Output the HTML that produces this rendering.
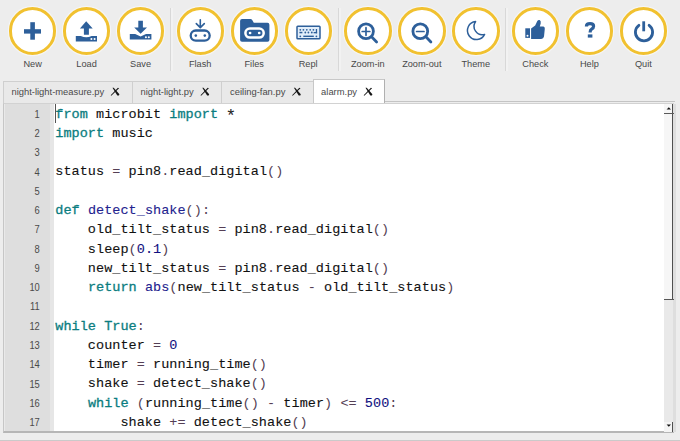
<!DOCTYPE html>
<html><head><meta charset="utf-8">
<style>
*{margin:0;padding:0;box-sizing:border-box}
html,body{width:680px;height:441px;overflow:hidden;background:#ededed;font-family:"Liberation Sans",sans-serif}
.btn{position:absolute;top:7.4px;width:47.4px;height:47.4px;border:3.9px solid #f1c130;border-radius:50%;background:#fff;box-shadow:0 0 1px 1px rgba(255,255,255,0.6)}
.btn svg{position:absolute;left:-3.6px;top:-3.6px;width:47.5px;height:47.5px}
.lbl{position:absolute;top:58.6px;width:80px;text-align:center;font-size:9.2px;color:#484848;line-height:11px}
.sep{position:absolute;top:8px;width:1px;height:63px;background:#d8d8d8;box-shadow:1.5px 0 0 #f7f7f7}
.tab{position:absolute;top:80.6px;height:22.4px;border:1px solid #cfcfcf;border-bottom:none;background:#e9e9e9}
.tab.act{top:79px;height:25px;background:#fff;border-color:#c8c8c8}
.tt{position:absolute;top:84.3px;font-size:9.4px;color:#4a4a4a;line-height:16px;white-space:nowrap}
#ed{position:absolute;left:3px;top:103px;width:671px;height:330px;border:1px solid #d2d2d2;border-left-color:#c6c6c6;border-bottom:2px solid #b6b6b6;background:#fff;overflow:hidden}
#gut{position:absolute;left:0;top:0;width:45.7px;height:100%;background:#dedede;border-left:1px solid #e9e9e9}
#gut2{position:absolute;left:45.7px;top:0;width:4px;height:100%;background:#e6e6e6}
.ln{position:absolute;left:0;width:35.8px;text-align:right;font-size:10.4px;color:#4a4a4a;height:19.27px;line-height:19.27px;margin-top:0.8px;transform:scaleX(0.9);transform-origin:100% 50%}
#code{position:absolute;left:51.3px;top:0.7px;font-family:"Liberation Mono",monospace;font-size:13.5px;letter-spacing:0.04px;line-height:19.27px;color:#111;white-space:pre;-webkit-text-stroke:0.1px}
.k{color:#0b7d80;-webkit-text-stroke:0.3px #0b7d80}
.n{color:#101080}
.f{color:#22228e}
.o{color:#553f55;-webkit-text-stroke:0}
#sb{position:absolute;left:660px;top:0;width:10.5px;height:328px;background:#ebebeb}
</style></head><body>
<!-- toolbar -->
<div class="btn" style="left:9.10px"></div>
<div class="btn" style="left:63.10px"></div>
<div class="btn" style="left:117.10px"></div>
<div class="btn" style="left:176.70px"></div>
<div class="btn" style="left:230.70px"></div>
<div class="btn" style="left:284.70px"></div>
<div class="btn" style="left:344.30px"></div>
<div class="btn" style="left:398.30px"></div>
<div class="btn" style="left:452.30px"></div>
<div class="btn" style="left:511.90px"></div>
<div class="btn" style="left:565.90px"></div>
<div class="btn" style="left:619.90px"></div>
<div class="sep" style="left:170.00px"></div>
<div class="sep" style="left:337.50px"></div>
<div class="sep" style="left:505.00px"></div>
<div class="lbl" style="left:-7.40px">New</div>
<div class="lbl" style="left:46.60px">Load</div>
<div class="lbl" style="left:100.60px">Save</div>
<div class="lbl" style="left:160.20px">Flash</div>
<div class="lbl" style="left:214.20px">Files</div>
<div class="lbl" style="left:268.20px">Repl</div>
<div class="lbl" style="left:327.80px">Zoom-in</div>
<div class="lbl" style="left:381.80px">Zoom-out</div>
<div class="lbl" style="left:435.80px">Theme</div>
<div class="lbl" style="left:495.40px">Check</div>
<div class="lbl" style="left:549.40px">Help</div>
<div class="lbl" style="left:603.40px">Quit</div>
<svg id="icons" width="680" height="75" viewBox="0 0 680 75" style="position:absolute;left:0;top:0">
<g fill="#2d5f9a">
<!-- new -->
<rect x="24" y="29.2" width="17" height="4.4"/>
<rect x="30.3" y="22.2" width="4.6" height="17.5"/>
<!-- load -->
<path d="M86.2,21.3 L92.7,28.6 L88.9,28.6 L88.9,34.8 L83.9,34.8 L83.9,28.6 L79.9,28.6 Z"/>
<path d="M75.8,36 L80.8,36 Q86.2,38.6 91.6,36 L97,36 L97,41.4 L75.8,41.4 Z"/>
<!-- save -->
<path d="M138.3,20.8 L142.9,20.8 L142.9,27.5 L147,27.5 L140.6,33.8 L134.2,27.5 L138.3,27.5 Z"/>
<path d="M129.8,33.9 L135.2,33.9 L140.6,36.6 L146,33.9 L151.4,33.9 L151.4,39.6 L129.8,39.6 Z"/>
<!-- files -->
<path d="M242,19 L250.5,19 Q251.5,19 252.2,20 L253.8,22.8 L267.5,22.8 Q269.4,22.8 269.4,24.7 L269.4,40 Q269.4,41.8 267.5,41.8 L242,41.8 Q240.1,41.8 240.1,40 L240.1,20.9 Q240.1,19 242,19 Z"/>
<!-- check -->
<rect x="525.3" y="28.3" width="4.7" height="9.6"/>
<path d="M531.1,28.6 L535.2,25.6 L537.3,21 Q538.2,19.6 539.6,20 Q541.2,20.8 540.7,23.6 L539.8,26.6 L543.4,26.6 Q545,26.8 544.8,28.8 L544,36.6 Q543.6,39 541.2,39 L531.1,39 Z"/>
<!-- help dot -->
<rect x="587.8" y="34.4" width="4.6" height="3.2"/>
</g>
<g fill="#fff">
<circle cx="91.4" cy="39" r="1.05"/><circle cx="94.6" cy="39" r="1.05"/>
<circle cx="145.9" cy="37.3" r="1.05"/><circle cx="148.8" cy="37.3" r="1.05"/>
<circle cx="527.5" cy="35.7" r="1"/>
</g>
<g fill="none" stroke="#2d5f9a" stroke-linecap="round" stroke-linejoin="round">
<!-- flash -->
<path d="M200.3,19.8 L200.3,27.6 M196.3,23.6 L200.3,27.6 L204.3,23.6" stroke-width="1.6"/>
<rect x="190.7" y="30.5" width="19" height="10.2" rx="5.1" stroke-width="2.3"/>
<!-- zoom in -->
<circle cx="366" cy="31.3" r="7.4" stroke-width="2.8"/>
<path d="M371.8,37.1 L376.6,41.9" stroke-width="2.8"/>
<path d="M362.2,31.5 L369.8,31.5 M366,27.7 L366,35.3" stroke-width="1.7"/>
<!-- zoom out -->
<circle cx="420.3" cy="31.3" r="7.4" stroke-width="2.8"/>
<path d="M426.1,37.1 L430.9,41.9" stroke-width="2.8"/>
<path d="M416.6,31.5 L424,31.5" stroke-width="1.7"/>
<!-- theme -->
<path d="M475.6,21.6 A9,9 0 1 0 484.6,34.4 A8.3,8.3 0 0 1 475.6,21.6 Z" stroke-width="1.5"/>
<!-- help -->
<path d="M586.4,26.4 Q586.4,23.6 590,23.6 Q593.6,23.6 593.6,26.2 Q593.6,28 591.6,29.1 Q590.1,29.9 590.1,32.4" stroke-width="3.2" stroke-linecap="butt" stroke-linejoin="miter"/>
<!-- quit -->
<path d="M643.7,21.3 L643.7,31.3" stroke-width="2.8" stroke-linecap="butt"/>
<path d="M638.9,25.3 A8.6,8.6 0 1 0 649.1,25.3" stroke-width="2.8"/>
<!-- repl -->
<rect x="297" y="26.3" width="23" height="12.4" rx="0.8" stroke-width="1.5" fill="#e2eefa"/>
</g>
<g fill="#2d5f9a">
<circle cx="195.8" cy="35.6" r="1.3"/><circle cx="204.8" cy="35.6" r="1.3"/>
<circle cx="300.3" cy="29.8" r="0.9"/><circle cx="303.4" cy="29.8" r="0.9"/><circle cx="306.8" cy="29.8" r="0.9"/><circle cx="310.2" cy="29.8" r="0.9"/><circle cx="313.4" cy="29.8" r="0.9"/>
<rect x="299.4" y="31.8" width="3" height="1.5"/><circle cx="305.3" cy="32.5" r="0.9"/><circle cx="308.4" cy="32.5" r="0.9"/><circle cx="311.8" cy="32.5" r="0.9"/>
<rect x="315.8" y="29" width="1.3" height="4.3"/><rect x="313.6" y="32" width="3.5" height="1.3"/>
<circle cx="300.3" cy="36.3" r="0.9"/><rect x="303.3" y="35.6" width="10.5" height="1.4"/><circle cx="316.4" cy="36.3" r="0.9"/>
</g>
<!-- files inner -->
<rect x="245.4" y="28.6" width="18.3" height="9" rx="4.5" fill="none" stroke="#fff" stroke-width="2.5"/>
<circle cx="250.1" cy="33" r="1.35" fill="#fff"/><circle cx="259.2" cy="33" r="1.35" fill="#fff"/>
</svg>
<!-- tabs -->
<div class="tab" style="left:3.0px;width:130.0px"></div>
<div class="tab" style="left:132.0px;width:90.4px"></div>
<div class="tab" style="left:221.4px;width:92.2px"></div>
<div class="tab act" style="left:313px;width:71.6px;border-right-color:#b0b0b0"></div>
<div style="position:absolute;left:384.6px;top:101px;width:290.4px;height:1px;background:#c4c4c4"></div>
<div class="tt" style="left:11.5px">night-light-measure.py</div>
<div class="tt" style="left:140.5px">night-light.py</div>
<div class="tt" style="left:230.1px">ceiling-fan.py</div>
<div class="tt" style="left:321.1px">alarm.py</div>
<svg width="680" height="441" style="position:absolute;left:0;top:0;pointer-events:none"><g fill="#161616">
<path d="M112.50,87.7 L113.70,87.7 L119.40,94.3 L118.90,95.6 L117.30,95.6 Z"/>
<path d="M119.10,88.2 L117.90,87.8 L110.70,95.2 L111.30,95.7 Z"/>
<path d="M202.30,87.7 L203.50,87.7 L209.20,94.3 L208.70,95.6 L207.10,95.6 Z"/>
<path d="M208.90,88.2 L207.70,87.8 L200.50,95.2 L201.10,95.7 Z"/>
<path d="M293.90,87.7 L295.10,87.7 L300.80,94.3 L300.30,95.6 L298.70,95.6 Z"/>
<path d="M300.50,88.2 L299.30,87.8 L292.10,95.2 L292.70,95.7 Z"/>
<path d="M365.50,87.7 L366.70,87.7 L372.40,94.3 L371.90,95.6 L370.30,95.6 Z"/>
<path d="M372.10,88.2 L370.90,87.8 L363.70,95.2 L364.30,95.7 Z"/>
</g></svg>
<div id="ed">
<div id="gut"></div><div id="gut2"></div>
<div class="ln" style="top:0.00px">1</div>
<div class="ln" style="top:19.27px">2</div>
<div class="ln" style="top:38.54px">3</div>
<div class="ln" style="top:57.81px">4</div>
<div class="ln" style="top:77.08px">5</div>
<div class="ln" style="top:96.35px">6</div>
<div class="ln" style="top:115.62px">7</div>
<div class="ln" style="top:134.89px">8</div>
<div class="ln" style="top:154.16px">9</div>
<div class="ln" style="top:173.43px">10</div>
<div class="ln" style="top:192.70px">11</div>
<div class="ln" style="top:211.97px">12</div>
<div class="ln" style="top:231.24px">13</div>
<div class="ln" style="top:250.51px">14</div>
<div class="ln" style="top:269.78px">15</div>
<div class="ln" style="top:289.05px">16</div>
<div class="ln" style="top:308.32px">17</div>
<div id="code"><span class="k">from</span> microbit <span class="k">import</span> <span style="position:relative;top:3px;left:-0.5px;color:#222;font-size:17px;line-height:10px">*</span>
<span class="k">import</span> music

status <span class="o">=</span> pin8<span class="o">.</span>read_digital<span class="o">()</span>

<span class="k">def</span> <span class="f">detect_shake</span><span class="o">():</span>
    old_tilt_status <span class="o">=</span> pin8<span class="o">.</span>read_digital<span class="o">()</span>
    sleep<span class="o">(</span><span class="n">0.1</span><span class="o">)</span>
    new_tilt_status <span class="o">=</span> pin8<span class="o">.</span>read_digital<span class="o">()</span>
    <span class="k">return</span> <span class="f">abs</span><span class="o">(</span>new_tilt_status <span class="o">-</span> old_tilt_status<span class="o">)</span>

<span class="k">while</span> <span class="k">True</span><span class="o">:</span>
    counter <span class="o">=</span> <span class="n">0</span>
    timer <span class="o">=</span> running_time<span class="o">()</span>
    shake <span class="o">=</span> detect_shake<span class="o">()</span>
    <span class="k">while</span> <span class="o">(</span>running_time<span class="o">()</span> <span class="o">-</span> timer<span class="o">)</span> <span class="o">&lt;=</span> <span class="n">500</span><span class="o">:</span>
        shake <span class="o">+=</span> detect_shake<span class="o">()</span>
</div>
<div id="cur" style="position:absolute;left:51px;top:0;width:1px;height:19px;background:#555"></div>

</div>
<!-- scrollbar -->
<div style="position:absolute;left:664px;top:104px;width:9.5px;height:328px;background:#e9e9e9"></div>
<div style="position:absolute;left:673px;top:104px;width:3px;height:328px;background:#dedede"></div>
<div style="position:absolute;left:664px;top:104px;width:9px;height:195px;background:#f6f6f6;border-right:1px solid #4e4e4e"></div>
<div style="position:absolute;left:664px;top:113px;width:10px;height:1px;background:#5a5a5a"></div>
<div style="position:absolute;left:664px;top:299px;width:10px;height:1px;background:#555"></div>
<div style="position:absolute;left:664px;top:422px;width:9px;height:10px;background:#f4f4f4;border-right:1px solid #4e4e4e"></div>
<svg width="680" height="441" style="position:absolute;left:0;top:0"><path d="M666.6,109.6 L668.8,107.2 L671,109.6 Z M666.6,424.4 L668.8,426.8 L671,424.4 Z" fill="#111"/></svg>
<div style="position:absolute;left:0;top:440px;width:680px;height:1px;background:#cacaca"></div>
</body></html>
